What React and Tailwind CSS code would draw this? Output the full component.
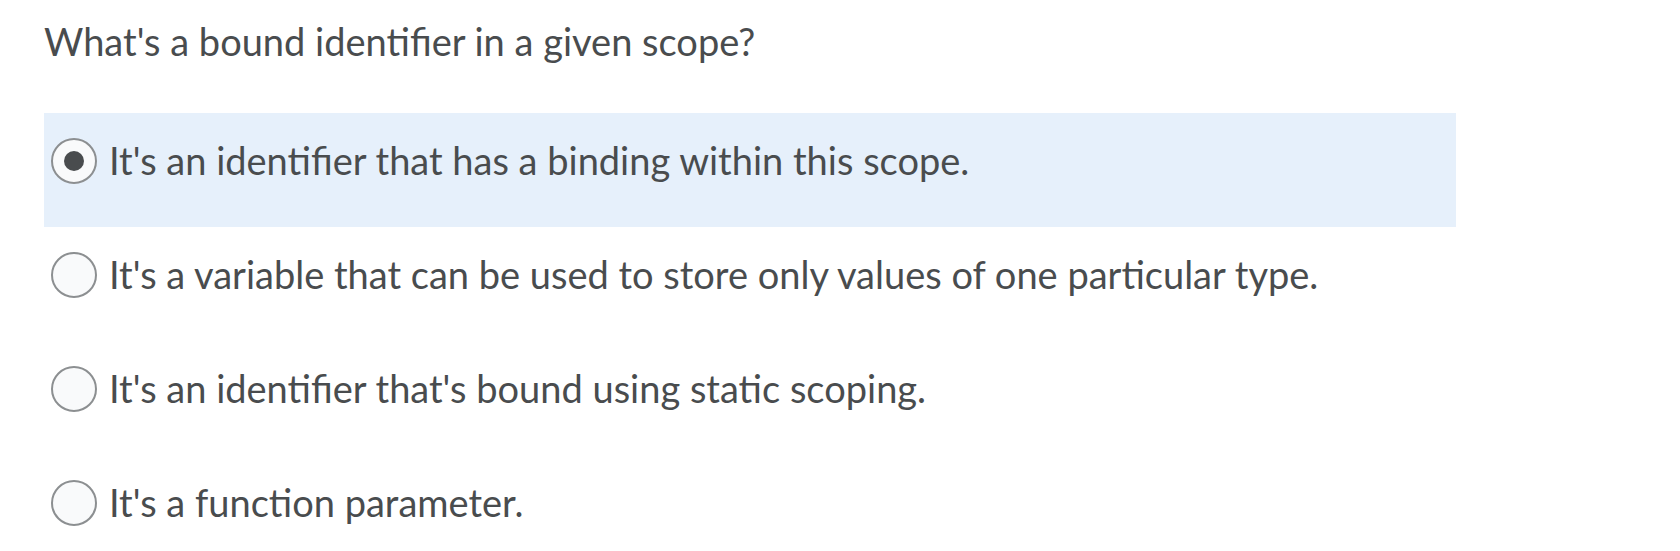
const options = [
  "It's an identifier that has a binding within this scope.",
  "It's a variable that can be used to store only values of one particular type.",
  "It's an identifier that's bound using static scoping.",
  "It's a function parameter.",
];

function Radio({ checked }) {
  return (
    <span className="flex h-[46px] w-[46px] shrink-0 items-center justify-center rounded-full border-2 border-[#8c8f91] bg-[#f9fafb]">
      {checked && <span className="h-[20px] w-[20px] rounded-full bg-[#494c4e]" />}
    </span>
  );
}

export default function App() {
  const selected = 0;

  return (
    <div className="min-h-screen bg-white text-[#494c4e] font-['Lato','Open_Sans',sans-serif]">
      <div className="w-[1412px] ml-[44px] pt-[19px]">
        <h1 className="text-[38px] leading-[1.2] font-normal">
          What's a bound identifier in a given scope?
        </h1>

        <div className="mt-[48px]">
          {options.map((text, i) => (
            <label
              key={i}
              className={`flex items-center gap-[12px] h-[114px] pl-[7px] pb-[18px] ${
                i === selected ? 'bg-[#e6f0fb]' : ''
              }`}
            >
              <Radio checked={i === selected} />
              <span className="text-[38px] leading-[1.2]">{text}</span>
            </label>
          ))}
        </div>
      </div>
    </div>
  );
}
